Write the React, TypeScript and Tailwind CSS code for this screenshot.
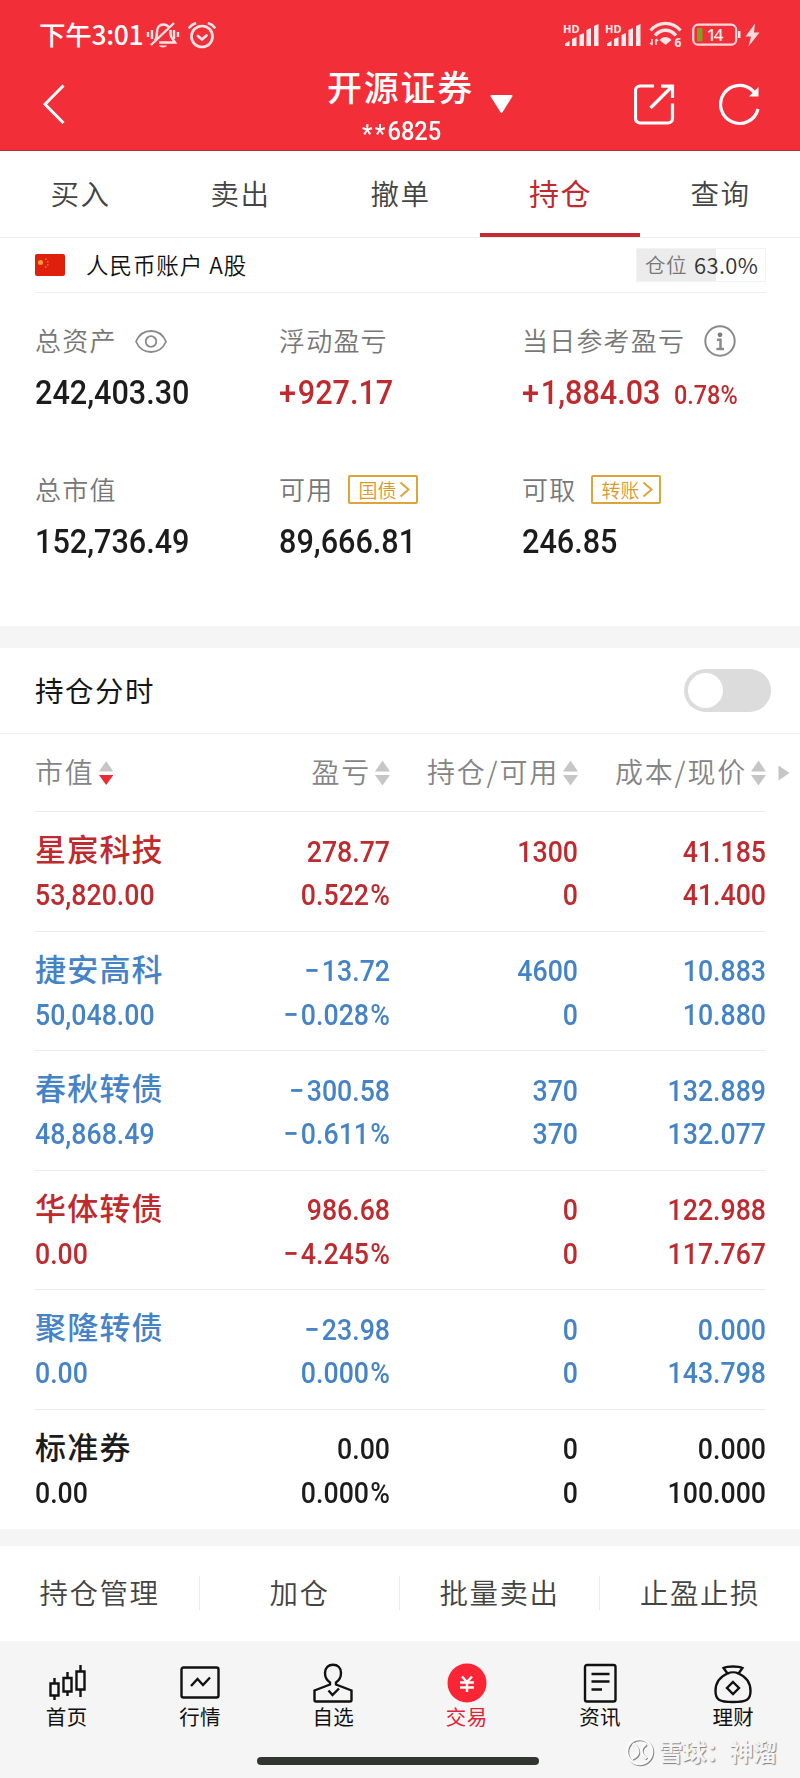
import type { ReactNode } from "react";

const sans = "font-['Noto_Sans_CJK_SC',sans-serif]";
const digits = "font-[Roboto,'Noto_Sans_CJK_SC',sans-serif] font-medium";

const tabs = ["买入", "卖出", "撤单", "持仓", "查询"];

const holdings = [
  { name: "星宸科技", value: "53,820.00", profit: "278.77", rate: "0.522%", amount: "1300", usable: "0", cost: "41.185", price: "41.400", color: "text-[#bf2a2e]" },
  { name: "捷安高科", value: "50,048.00", profit: "−13.72", rate: "−0.028%", amount: "4600", usable: "0", cost: "10.883", price: "10.880", color: "text-[#4583c9]" },
  { name: "春秋转债", value: "48,868.49", profit: "−300.58", rate: "−0.611%", amount: "370", usable: "370", cost: "132.889", price: "132.077", color: "text-[#4583c9]" },
  { name: "华体转债", value: "0.00", profit: "986.68", rate: "−4.245%", amount: "0", usable: "0", cost: "122.988", price: "117.767", color: "text-[#bf2a2e]" },
  { name: "聚隆转债", value: "0.00", profit: "−23.98", rate: "0.000%", amount: "0", usable: "0", cost: "0.000", price: "143.798", color: "text-[#4583c9]" },
  { name: "标准券", value: "0.00", profit: "0.00", rate: "0.000%", amount: "0", usable: "0", cost: "0.000", price: "100.000", color: "text-[#1c1c1c]" },
];

const actions = ["持仓管理", "加仓", "批量卖出", "止盈止损"];

function Signal() {
  return (
    <svg className="overflow-visible" width="36" height="26" viewBox="0 -2 36 26" fill="#ffe9ea">
      <text x="0" y="8.500" fontSize="11" fontWeight="700" fontFamily="Noto Sans" textLength="16.500">
        HD
      </text>
      <path d="M2 22v-2.500l4.500-2.500v5zM9 22v-7l4.500-2v9zM16.500 22v-11l4.500-2v13zM23.500 22V6l4.500-2v18zM31 22V2l4.500-2v22z" />
    </svg>
  );
}

function StatusBar() {
  return (
    <div className="flex h-[70px] items-center pl-[39px] text-white">
      <span className="w-[101px] pb-[2px] text-[26.500px] leading-[32px] font-[450] tracking-[-0.300px] whitespace-nowrap">下午3:01</span>
      <svg className="ml-[6px]" width="34" height="28" viewBox="0 0 34 28" fill="none" stroke="#ffe4e5" strokeWidth="2.400">
        <path d="M2 11v5M6 9v9M28 9v9M32 11v5" />
        <path d="M9 19.500c2-3 2-5 2-8.500 0-4.500 2.500-7.500 6.500-7.500 2.500 0 4 1 5 2.500M24.500 9v4c0 3.500 2 5 4.500 8.500H13" />
        <path d="M28 2L5 24" />
        <path d="M13 24.500h8c-1 2.500-7 2.500-8 0z" fill="#ffe4e5" stroke="none" />
      </svg>
      <svg className="ml-[8px]" width="28" height="28" viewBox="0 0 28 28" fill="none" stroke="#ffe4e5" strokeWidth="2.700" strokeLinecap="round">
        <circle cx="14" cy="15.500" r="10.500" />
        <path d="M1.500 6.500C3 4.500 5 3 7 2.500M26.500 6.500C25 4.500 23 3 21 2.500M10 15l4 3.500 4.500-4" />
      </svg>
      <div className="ml-[347px] flex items-center">
        <Signal />
        <div className="ml-[6px] flex">
          <Signal />
        </div>
        <svg className="ml-[8px] overflow-visible" width="34" height="30" viewBox="0 -1 34 30" fill="none" stroke="#ffe4e5" strokeWidth="3.300">
          <path d="M1.500 9.500c8-9.500 22-9.500 30 0M6 14.500c6-7 15-7 21 0" />
          <path d="M10.500 19c3.500-4 8.500-4 12 0l-6 5z" fill="#ffe4e5" stroke="none" />
          <path d="M3 18v6M7 18v6M1 22l2.500 2M7 18l2 2" strokeWidth="1.500" />
          <text x="25.500" y="25.500" fontSize="12" fontWeight="700" fontFamily="Noto Sans" fill="#ffe4e5" stroke="none">
            6
          </text>
        </svg>
        <svg className="ml-[9px]" width="50" height="24" viewBox="0 0 50 24">
          <rect x="1.200" y="1.700" width="43" height="20" rx="5" fill="none" stroke="#ffd9da" strokeWidth="2.200" />
          <rect x="5" y="5" width="5.500" height="13.500" rx="1" fill="#7fa020" />
          <path d="M46 8h2.500v7H46z" fill="#ffe4e5" />
          <text x="14.500" y="18" fontSize="17" fontWeight="500" fontFamily="Noto Sans" fill="#ffe9ea" textLength="17">
            14
          </text>
        </svg>
        <svg className="ml-[3px]" width="15" height="24" viewBox="0 0 15 24" fill="#ffd9dc">
          <path d="M10 0.500L0.500 13.500h5.500L3.500 23.500 14.500 9.500H9z" />
        </svg>
      </div>
    </div>
  );
}

function TopBar() {
  return (
    <div className="grid h-[81px] grid-cols-[328px_144px_1fr] text-white">
      <svg className="mt-[14px] ml-[42px]" width="24" height="40" viewBox="0 0 24 40" fill="none" stroke="white" strokeWidth="3">
        <path d="M21.500 1.500L3 20.200 21.500 39" />
      </svg>
      <div className="flex flex-col items-center">
        <h1 className="mt-[-1px] ml-px text-[35px] leading-[34px] font-medium tracking-[1.700px] whitespace-nowrap">开源证券</h1>
        <div className={`mt-[13px] ml-[3px] flex h-[30px] origin-center scale-x-[.91] text-[26px] leading-[30px] ${digits}`}>
          <span className="pt-[3px] tracking-[2.500px]">**</span>
          <span>6825</span>
        </div>
      </div>
      <div className="flex">
        <svg className="mt-[24px] ml-[18px]" width="23" height="20" viewBox="0 0 23 20" fill="white" stroke="white" strokeWidth="2" strokeLinejoin="round">
          <path d="M1.500 2h20l-10 16z" />
        </svg>
        <svg className="mt-[13px] ml-[121px]" width="41" height="42" viewBox="0 0 41 42" fill="none" stroke="white" strokeWidth="3.200">
          <path d="M20 3H6a4.500 4.500 0 0 0-4.500 4.500v28A4.500 4.500 0 0 0 6 40h28a4.500 4.500 0 0 0 4.500-4.500V20.500" />
          <path d="M16.500 25L37 4.500M27 3.200h11.500V15" />
        </svg>
        <svg className="mt-[13px] ml-[44px]" width="42" height="43" viewBox="0 0 42 43" fill="none" stroke="white" strokeWidth="3.200">
          <path d="M39 26A19 19 0 1 1 33.500 7.500L38 12" />
          <path d="M39.500 4v9.500H30z" fill="white" stroke="none" />
        </svg>
      </div>
    </div>
  );
}

function Stat({ label, extra, children }: { label: string; extra?: ReactNode; children: ReactNode }) {
  return (
    <div>
      <div className="flex h-[40px] items-center text-[26px] leading-[40px] font-[350] tracking-[1.200px] whitespace-nowrap text-[#777]">
        <span>{label}</span>
        {extra}
      </div>
      <div className={`mt-[12px] flex h-[40px] origin-left scale-x-[.9] text-[34px] leading-[40px] whitespace-nowrap ${digits}`}>{children}</div>
    </div>
  );
}

function LinkTag({ children }: { children: string }) {
  return (
    <span className="mt-px ml-[15px] flex h-[29px] w-[70px] items-center rounded-[2px] border-2 border-[#dfa437] pl-[8px] text-[19px] leading-[25px] font-[350] tracking-normal text-[#d99a2b]">
      <span>{children}</span>
      <svg className="ml-[3px]" width="11" height="17" viewBox="0 0 11 17" fill="none" stroke="#dfa437" strokeWidth="2">
        <path d="M1.500 1.500l8 7-8 7" />
      </svg>
    </span>
  );
}

function Sorter({ down = false }: { down?: boolean }) {
  return (
    <svg className="ml-[4px]" width="15" height="26" viewBox="0 0 15 26">
      <path d="M7.500 0.500l7.500 11H0z" fill="#c6c6c6" />
      <path d="M7.500 25.500l7.500-10.500H0z" fill={down ? "#f02a35" : "#c6c6c6"} />
    </svg>
  );
}

function HeadCell({ label, down }: { label: string; down?: boolean }) {
  return (
    <div className="flex items-center justify-end whitespace-nowrap">
      <span className="pb-[3px] tracking-[1.800px]">{label}</span>
      <Sorter down={down} />
    </div>
  );
}

function Figure({ value }: { value: string }) {
  const negative = value.startsWith("−");
  const percent = value.endsWith("%");
  return (
    <div className="flex justify-end">
      {negative && <span className="mr-[3px]">−</span>}
      <span>{value.replace("−", "").replace("%", "")}</span>
      {percent && <span className="ml-[1.500px]">%</span>}
    </div>
  );
}

function NumCell({ top, bottom }: { top: string; bottom: string }) {
  return (
    <div className={`origin-right scale-x-[.89] pt-[17.500px] text-right text-[30px] leading-[43.500px] whitespace-nowrap ${digits}`}>
      <Figure value={top} />
      <Figure value={bottom} />
    </div>
  );
}

const icons = {
  home: (
    <path d="M13.500 14v5M13.500 32v4M9.500 19.500h8v12h-8zM26.500 8v6M26.500 28v4M22.500 14h8v13.500h-8zM39.500 1v6M39.500 26v7M35.500 7.500h8v18h-8z" />
  ),
  market: (
    <>
      <rect x="7.500" y="3.500" width="37" height="30" rx="2" />
      <path d="M17 22l6.500-7 5.500 6 7-7.500" />
    </>
  ),
  watch: (
    <>
      <path d="M23 18.500c-3-2-5-5-5-9.500C18 3.500 21.500.8 26 .8s8 2.700 8 8.200c0 4.500-2 7.500-5 9.500v2l15.500 6V36c0 1-.5 1.500-1.500 1.500H9c-1 0-1.500-.5-1.500-1.500v-9.500l15.500-6z" />
      <path d="M21.500 26.500l4 4.500 6.500-6.500" />
    </>
  ),
  trade: (
    <>
      <circle cx="26" cy="19" r="19.500" fill="#fb2536" stroke="none" />
      <path d="M21 12.500l5 5.500 5-5.500M19 18.500h14M19 23.500h14M26 18v10" stroke="white" />
    </>
  ),
  news: (
    <>
      <rect x="11" y="1" width="30.500" height="36.500" rx="2" />
      <path d="M17.500 10h18M17.500 17.500h18M17.500 25.500h10.500" />
    </>
  ),
  wealth: (
    <>
      <path d="M20.500 9.500l-4-5.500c4-2 15-2 19 0l-4 5.500c7 3 12 9 12 17.500 0 8.500-3.500 11-17.500 11S8.500 35.500 8.500 27c0-8.500 5-14.500 12-17.500z" />
      <path d="M20.500 9.500c3-1.500 8-1.500 11 0M26 18l6 6-6 6-6-6z" />
    </>
  ),
};

const navItems: { label: string; icon: keyof typeof icons }[] = [
  { label: "首页", icon: "home" },
  { label: "行情", icon: "market" },
  { label: "自选", icon: "watch" },
  { label: "交易", icon: "trade" },
  { label: "资讯", icon: "news" },
  { label: "理财", icon: "wealth" },
];

export default function App() {
  return (
    <div className={`relative h-[1778px] w-[800px] overflow-hidden bg-white ${sans}`}>
      <header className="h-[151px] border-b border-[#b92a31] bg-[#f22f39]">
        <StatusBar />
        <TopBar />
      </header>

      {/* Trade tabs */}
      <nav className="flex h-[87px] border-b border-[#ececec]">
        {tabs.map((tab) => (
          <div
            key={tab}
            className={`flex h-[86px] flex-1 justify-center pl-[1px] leading-[83px] ${
              tab === "持仓"
                ? "border-b-4 border-[#c52b30] text-[30px] tracking-[1.500px] text-[#bf2a2e]"
                : "text-[28.500px] font-[350] tracking-[1.500px] text-[#444]"
            }`}
          >
            {tab}
          </div>
        ))}
      </nav>

      {/* Account line */}
      <div className="mr-[34px] ml-[35px] flex h-[55px] items-center border-b border-[#efefef]">
        <svg width="30" height="22" viewBox="0 0 30 22">
          <rect width="30" height="22" rx="2" fill="#e0200d" />
          <circle cx="5.500" cy="8.500" r="2.500" fill="#f6a52c" />
          <path d="M10 4.500h1.500v1.500H10zM12 7h1.500v1.500H12zM12 10h1.500v1.500H12zM10 12.500h1.500V14H10z" fill="#f07a1e" />
        </svg>
        <span className="ml-[21px] pb-[2px] text-[22.500px] leading-[50px] font-[350] tracking-[0.950px] whitespace-nowrap text-[#111]">
          人民币账户 A股
        </span>
        <div className="ml-auto flex h-[34px] w-[130px] items-center border border-[#f3f3f3] bg-[linear-gradient(to_right,#ececec_62%,#fff_62%)] pb-[2px] pl-[8px] leading-[30px] whitespace-nowrap">
          <span className="text-[20.500px] font-[350] tracking-[0.500px] text-[#777]">仓位</span>
          <span className="ml-[7px] text-[22px] font-[350] tracking-[0.400px] text-[#333]">63.0%</span>
        </div>
      </div>

      {/* Account totals */}
      <div className="grid h-[333px] grid-cols-[244px_243px_1fr] content-start gap-y-[57px] pt-[27px] pl-[35px] text-[#1c1c1c]">
        <Stat
          label="总资产"
          extra={
            <svg className="mt-[2px] ml-[18px]" width="32" height="23" viewBox="0 0 32 23" fill="none" stroke="#8a8a8a" strokeWidth="1.800">
              <path d="M1 11.500C7-2.500 25-2.500 31 11.500 25 25.500 7 25.500 1 11.500z" />
              <circle cx="16" cy="11.500" r="5.300" />
            </svg>
          }
        >
          242,403.30
        </Stat>
        <Stat label="浮动盈亏">
          <span className="text-[#bf2a2e]">
            <span className="mr-[2px]">+</span>927.17
          </span>
        </Stat>
        <Stat
          label="当日参考盈亏"
          extra={
            <svg className="mt-px ml-[19px]" width="32" height="32" viewBox="0 0 32 32" fill="none" stroke="#8a8a8a" strokeWidth="2">
              <circle cx="16" cy="16" r="14.700" />
              <circle cx="16" cy="9.800" r="2.400" fill="#7c7c7c" stroke="none" />
              <path d="M13 14.800h3.500v9M12.500 24h7.500" strokeWidth="2.500" />
            </svg>
          }
        >
          <span className="text-[#bf2a2e]">
            <span className="mr-[2px]">+</span>1,884.03
          </span>
          <span className="ml-[15px] pt-[3px] text-[26px] leading-[40px] text-[#bf2a2e]">0.78%</span>
        </Stat>
        <Stat label="总市值">152,736.49</Stat>
        <Stat label="可用" extra={<LinkTag>国债</LinkTag>}>
          89,666.81
        </Stat>
        <Stat label="可取" extra={<LinkTag>转账</LinkTag>}>
          246.85
        </Stat>
      </div>

      <div className="h-[22px] bg-[#f5f5f5]" />

      {/* Intraday switch */}
      <div className="flex h-[86px] items-center justify-between border-b border-[#efefef] pr-[29px] pl-[35px]">
        <span className="pb-[2px] text-[28.500px] leading-[80px] tracking-[1.500px] text-[#161616]">持仓分时</span>
        <div className="h-[43px] w-[87px] rounded-full bg-[#dcdcdc] p-[4px]">
          <div className="size-[35px] rounded-full bg-white" />
        </div>
      </div>

      {/* Holdings table */}
      <div className="grid h-[77px] grid-cols-[78px_277px_188px_188px_1fr] items-center pl-[35px] text-[28px] leading-[72px] font-[350] text-[#858585]">
        <HeadCell label="市值" down />
        <HeadCell label="盈亏" />
        <HeadCell label="持仓/可用" />
        <HeadCell label="成本/现价" />
        <svg className="ml-[12px]" width="12" height="16" viewBox="0 0 12 16">
          <path d="M0.500 0.500l11 7.500-11 7.500z" fill="#c6c6c6" />
        </svg>
      </div>
      {holdings.map((item) => (
        <div
          key={item.name}
          className={`mx-[35px] grid h-[119.500px] grid-cols-[166px_189px_188px_188px] border-t border-[#ebebeb] ${item.color}`}
        >
          <div className="pt-[16px] whitespace-nowrap">
            <div className="text-[31px] leading-[40px] font-medium tracking-[1.200px]">{item.name}</div>
            <div className={`mt-[5px] origin-left scale-x-[.89] text-[30px] leading-[44px] ${digits}`}>{item.value}</div>
          </div>
          <NumCell top={item.profit} bottom={item.rate} />
          <NumCell top={item.amount} bottom={item.usable} />
          <NumCell top={item.cost} bottom={item.price} />
        </div>
      ))}

      <div className="mt-px h-[17px] bg-[#f5f5f5]" />

      {/* Quick actions */}
      <div className="flex h-[95px] items-center pb-px">
        {actions.map((action) => (
          <div
            key={action}
            className="flex h-[34px] w-[200px] items-center justify-center border-r border-[#ececec] pb-[3px] text-[28.500px] leading-[31px] font-[350] tracking-[1.500px] whitespace-nowrap text-[#444] last:border-r-0"
          >
            {action}
          </div>
        ))}
      </div>

      {/* Bottom navigation */}
      <nav className="flex h-[137px] bg-[#f5f5f5] pt-[22px]">
        {navItems.map((item) => (
          <div key={item.label} className={`flex flex-1 flex-col items-center ${item.icon === "trade" ? "text-[#e0253a]" : "text-[#111]"}`}>
            <svg className="mt-px overflow-visible" width="52" height="39" viewBox="0 0 52 39" fill="none" stroke="#111" strokeWidth="2.400">
              {icons[item.icon]}
            </svg>
            <span className="mt-[-1px] text-[20.500px] leading-[28px] tracking-[0.300px]">{item.label}</span>
          </div>
        ))}
      </nav>

      <div className="absolute top-[1757px] left-[257px] h-[8px] w-[282px] rounded-full bg-[#333533]" />

      <div className="absolute top-[1735px] left-[625px] flex items-center text-[24px] leading-[32px] font-bold tracking-[-0.500px] whitespace-nowrap text-[#f4f4f4] [text-shadow:1px_1px_1px_#808080]">
        <svg className="drop-shadow-[1px_1px_0.5px_#888]" width="29" height="29" viewBox="0 0 29 29" fill="none" stroke="#fafafa" strokeWidth="2.500">
          <circle cx="14.500" cy="14.500" r="12.500" />
          <path d="M8 6.500c4 3.500 6 6 5 9.500s-3 4.500-6 5.500M21 7c-3 2-5 4-4.500 7.500s2 5 5 7" />
        </svg>
        <span className="ml-[5px]">雪球：神溜</span>
      </div>
    </div>
  );
}
